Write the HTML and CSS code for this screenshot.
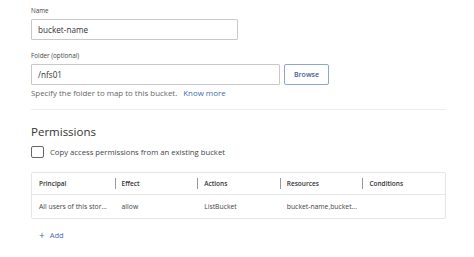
FILE: index.html
```html
<!DOCTYPE html>
<html>
<head>
<meta charset="utf-8">
<link rel="stylesheet" href="styles.css">
</head>
<body>
<div class="page">
  <div class="label">Name</div>
  <div class="input input-name">bucket-name</div>

  <div class="label label-folder">Folder (optional)</div>
  <div class="folder-row">
    <div class="input input-folder">/nfs01</div>
    <button class="browse">Browse</button>
  </div>
  <div class="helper">Specify the folder to map to this bucket. <a class="link">Know more</a></div>

  <div class="sep"></div>

  <h2 class="heading">Permissions</h2>
  <label class="check-row"><span class="checkbox"></span><span>Copy access permissions from an existing bucket</span></label>

  <div class="table">
    <div class="row head">
      <div class="cell">Principal</div>
      <div class="cell div">Effect</div>
      <div class="cell div">Actions</div>
      <div class="cell div">Resources</div>
      <div class="cell div">Conditions</div>
    </div>
    <div class="row body">
      <div class="cell">All users of this stor...</div>
      <div class="cell">allow</div>
      <div class="cell">ListBucket</div>
      <div class="cell">bucket-name,bucket...</div>
      <div class="cell"></div>
    </div>
  </div>

  <div class="add"><span class="plus">+</span><span>Add</span></div>
</div>
</body>
</html>
```

FILE: styles.css
```css
html, body {
  margin: 0;
  padding: 0;
  background: #fff;
}
body {
  font-family: "Open Sans", "Noto Sans", sans-serif;
  color: #333;
}
.page {
  padding: 6px 0 0 31px;
  width: 415px;
}
.label {
  font-size: 6.3px;
  line-height: 9px;
  height: 9px;
  color: #444;
  margin-bottom: 4px;
}
.label-folder {
  margin-top: 11px;
}
.input {
  box-sizing: border-box;
  height: 21px;
  border: 1px solid #c9c9c9;
  border-radius: 1px;
  padding: 0 6px;
  font-size: 8.2px;
  line-height: 19px;
  color: #333;
}
.input-name {
  width: 207px;
}
.folder-row {
  display: flex;
  gap: 4px;
}
.input-folder {
  width: 249px;
}
.browse {
  box-sizing: border-box;
  width: 45px;
  height: 21px;
  border: 1px solid #8fa3dc;
  border-radius: 2px;
  background: #fff;
  color: #3f5b9c;
  font-family: inherit;
  font-size: 7px;
  font-weight: 600;
  padding: 0;
}
.helper {
  margin-top: 2px;
  font-size: 7.9px;
  line-height: 12px;
  color: #666;
}
.link {
  color: #3e6cb5;
  margin-left: 4px;
}
.sep {
  margin-top: 10px;
  height: 1px;
  background: #ececec;
}
.heading {
  margin: 14px 0 0 0;
  font-size: 11.5px;
  font-weight: 400;
  line-height: 16px;
  color: #333;
}
.check-row {
  margin-top: 6px;
  display: flex;
  align-items: center;
  gap: 6px;
  height: 12px;
  font-size: 7.7px;
  color: #444;
}
.checkbox {
  box-sizing: border-box;
  width: 13px;
  height: 12px;
  border: 1px solid #666;
  border-radius: 2px;
}
.table {
  margin-top: 14px;
  border: 1px solid #e6e6e6;
  border-radius: 2px;
}
.row {
  display: grid;
  grid-template-columns: repeat(5, 1fr);
  align-items: center;
}
.head {
  height: 21px;
  font-weight: 600;
  font-size: 6.5px;
  color: #333;
}
.body {
  height: 23px;
  border-top: 1px solid #e6e6e6;
  font-size: 6.8px;
  color: #444;
}
.cell {
  padding-left: 7px;
  white-space: nowrap;
}
.cell.div {
  position: relative;
}
.cell.div::before {
  content: "";
  position: absolute;
  left: 0;
  top: 50%;
  width: 1px;
  height: 11px;
  margin-top: -5.5px;
  background: #999;
}
.add {
  margin-top: 10px;
  padding-left: 8px;
  display: flex;
  align-items: center;
  gap: 5px;
  height: 12px;
  font-size: 7.5px;
  color: #3e6cb5;
}
.plus {
  font-size: 10px;
  line-height: 12px;
}
```
